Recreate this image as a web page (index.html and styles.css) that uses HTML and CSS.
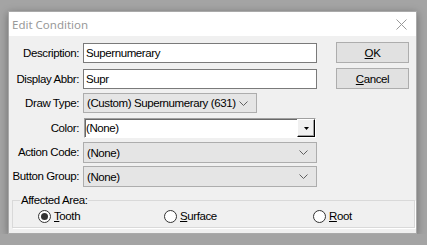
FILE: index.html
```html
<!DOCTYPE html>
<html>

<head>
  <meta charset="UTF-8">
  <title>Edit Condition</title>
  <link rel="stylesheet" href="styles.css">
</head>

<body>
  <div class="window">
    <div class="titlebar">
      <span class="title">Edit Condition</span>
      <svg class="close" viewBox="0 0 11 11">
        <path d="M0.5 0.5 L10.5 10.5 M10.5 0.5 L0.5 10.5" />
      </svg>
    </div>

    <div class="content">
      <div class="top">
        <div class="fields">
          <label>Description:</label>
          <div class="edit">Supernumerary</div>

          <label>Display Abbr:</label>
          <div class="edit">Supr</div>

          <label>Draw Type:</label>
          <div class="select short">
            <span>(Custom) Supernumerary (631)</span>
            <svg class="chevron" viewBox="0 0 9 5"><path d="M0.5 0.5 L4.5 4.5 L8.5 0.5" /></svg>
          </div>

          <label>Color:</label>
          <div class="combo">
            <span>(None)</span>
            <div class="drop"><svg viewBox="0 0 5 3"><path d="M0 0 H5 L2.5 3 Z" /></svg></div>
          </div>

          <label>Action Code:</label>
          <div class="select">
            <span>(None)</span>
            <svg class="chevron" viewBox="0 0 9 5"><path d="M0.5 0.5 L4.5 4.5 L8.5 0.5" /></svg>
          </div>

          <label>Button Group:</label>
          <div class="select">
            <span>(None)</span>
            <svg class="chevron" viewBox="0 0 9 5"><path d="M0.5 0.5 L4.5 4.5 L8.5 0.5" /></svg>
          </div>
        </div>

        <div class="buttons">
          <button><u>O</u>K</button>
          <button><u>C</u>ancel</button>
        </div>
      </div>

      <fieldset class="group">
        <legend>Affected Area:</legend>
        <div class="radios">
          <div class="radio checked"><i></i><span><u>T</u>ooth</span></div>
          <div class="radio"><i></i><span><u>S</u>urface</span></div>
          <div class="radio"><i></i><span><u>R</u>oot</span></div>
        </div>
      </fieldset>
    </div>
  </div>
</body>

</html>
```

FILE: styles.css
```css
:root {
  --font-ui: "Liberation Sans", Arial, sans-serif;
  --color-desktop: #a4a4a4;
  --color-face: #f0f0f0;
  --color-edit-border: #7a7a7a;
  --color-select-bg: #e5e5e5;
  --color-select-border: #adadad;
  --color-button-bg: #e1e1e1;
}

* {
  box-sizing: border-box;
}

body {
  margin: 0;
  background-color: var(--color-desktop);
  font-family: var(--font-ui);
  font-size: 11.5px;
  letter-spacing: -0.4px;
  color: #000;
}

.window {
  margin: 11px 0 0 8px;
  width: 409px;
  height: 223px;
  background-color: var(--color-face);
  border: 1px solid #aaaaaa;
  box-shadow: 0 2px 8px rgba(0, 0, 0, 0.35);
}

.titlebar {
  height: 24px;
  background-color: #fff;
  padding: 0 9px 0 3px;

  display: flex;
  align-items: center;
  justify-content: space-between;

  .title {
    font-family: "Noto Sans", sans-serif;
    font-size: 11.5px;
    letter-spacing: 0;
    color: #999;
  }

  .close {
    width: 11px;
    height: 11px;

    path {
      stroke: #999;
      stroke-width: 1;
      fill: none;
    }
  }
}

.content {
  padding: 6px 0 0 3px;
}

.top {
  display: flex;
  align-items: flex-start;
  gap: 19px;
}

.fields {
  margin-top: 1px;

  display: grid;
  grid-template-columns: 67px 234px;
  grid-template-rows: 26px 24px 25px 24px 24px 21px;
  column-gap: 4px;
  align-items: start;

  label {
    height: 20px;
    text-align: right;
    white-space: nowrap;

    display: flex;
    align-items: center;
    justify-content: flex-end;
  }
}

.edit {
  height: 20px;
  padding-left: 2px;
  background-color: #fff;
  border: 1px solid var(--color-edit-border);

  display: flex;
  align-items: center;
}

.select {
  height: 21px;
  padding: 0 8px 0 3px;
  background-color: var(--color-select-bg);
  border: 1px solid var(--color-select-border);
  white-space: nowrap;

  display: flex;
  align-items: center;
  justify-content: space-between;

  .chevron {
    flex-shrink: 0;
    width: 9px;
    height: 5px;

    path {
      stroke: #606060;
      stroke-width: 1;
      fill: none;
    }
  }
}

.select.short {
  width: 174px;
  height: 20px;
}

.combo {
  margin-left: 1px;
  width: 232px;
  height: 20px;
  padding: 0 0 0 1px;
  background-color: #fff;
  border-style: solid;
  border-width: 1px;
  border-color: #a0a0a0 #ffffff #ffffff #a0a0a0;
  box-shadow: inset 1px 1px 0 #696969;

  display: flex;
  align-items: center;
  justify-content: space-between;

  .drop {
    width: 18px;
    height: 18px;
    background-color: var(--color-face);
    border-style: solid;
    border-width: 1px;
    border-color: #fff #000 #000 #fff;
    box-shadow: inset -1px -1px 0 #a0a0a0;

    display: flex;
    align-items: center;
    justify-content: center;

    svg {
      width: 5px;
      height: 3px;
    }
  }
}

.buttons {
  display: flex;
  flex-direction: column;
  gap: 5px;

  button {
    width: 73px;
    height: 21px;
    padding: 0;
    background-color: var(--color-button-bg);
    border: 1px solid var(--color-select-border);
    font-family: var(--font-ui);
    font-size: 11.5px;
    letter-spacing: -0.4px;
    color: #000;
  }
}

.group {
  margin: 7px 0 0 0;
  width: 403px;
  height: 34px;
  padding: 0 0 0 7px;
  border: 1px solid #d9d9d9;
  box-shadow: 1px 1px 0 #fff;

  legend {
    padding: 0 1px;
    line-height: 13px;
  }
}

.radios {
  margin-top: 2px;
  padding-left: 18px;

  display: grid;
  grid-template-columns: 126px 149px auto;

  .radio {
    height: 14px;

    display: flex;
    align-items: center;
    gap: 3px;

    i {
      width: 13px;
      height: 13px;
      border: 1px solid #333;
      border-radius: 50%;
      background-color: #fff;

      display: flex;
      align-items: center;
      justify-content: center;
    }
  }

  .radio.checked i::after {
    content: "";
    width: 7px;
    height: 7px;
    border-radius: 50%;
    background-color: #333;
  }
}
```
